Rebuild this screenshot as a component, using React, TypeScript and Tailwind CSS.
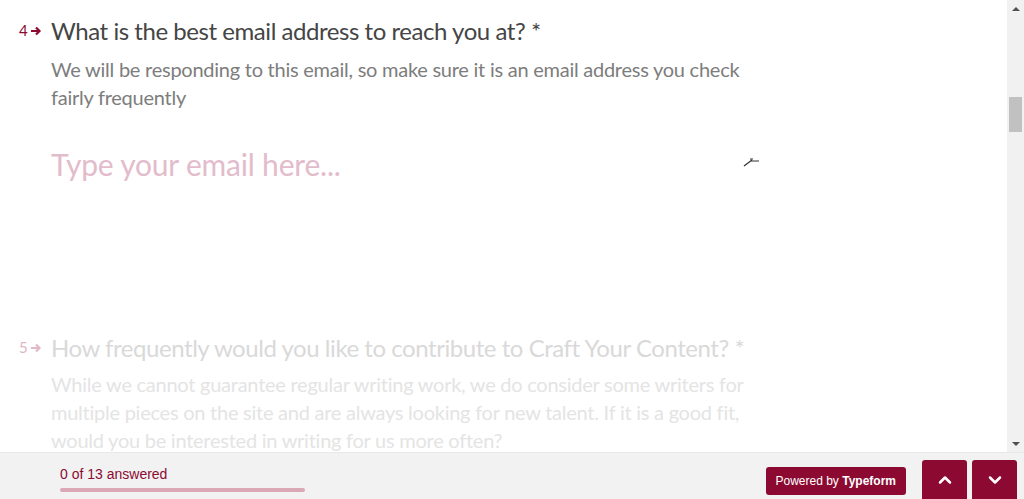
import { ChevronDown, ChevronUp } from 'lucide-react'

const sans = { fontFamily: 'Lato, "Noto Sans", sans-serif' }

function Arrow({ faded }: { faded?: boolean }) {
  return (
    <svg width="12" height="10" viewBox="0 0 12 10" className={faded ? 'text-[#e2b9c6]' : 'text-[#8c0a31]'}>
      <path d="M1 5h8M6 1.5L9.5 5 6 8.5" fill="none" stroke="currentColor" strokeWidth="2.2" />
    </svg>
  )
}

function Num({ n, faded }: { n: number; faded?: boolean }) {
  return (
    <div className="absolute left-[-32px] top-[8px] flex items-center gap-[2px]">
      <span className={`text-[15px] leading-none ${faded ? 'text-[#e0b5c3]' : 'text-[#8c0a31]'}`}>{n}</span>
      <Arrow faded={faded} />
    </div>
  )
}

export default function App() {
  return (
    <div className="flex h-[499px] w-[1024px] flex-col overflow-hidden bg-white" style={sans}>
      <div className="flex min-h-0 flex-1 overflow-hidden">
        <div className="flex-1 overflow-hidden pl-[51px] pt-[15px]">
          {/* question 4 */}
          <div className="relative w-[720px]">
            <Num n={4} />
            <h2 className="whitespace-nowrap text-[24px] leading-[32px] tracking-[-0.45px] text-[#454545]">
              What is the best email address to reach you at? *
            </h2>
            <p className="mt-[8px] whitespace-nowrap text-[20px] leading-[28px] tracking-[-0.25px] text-[#7d7d7d]">
              We will be responding to this email, so make sure it is an email address you check
              <br />
              fairly frequently
            </p>
            <div className="relative mt-[33px] h-[40px]">
              <span className="text-[30px] leading-[40px] tracking-[-0.2px] text-[#e3bccb]">Type your email here...</span>
              <svg className="absolute left-[692px] top-[12px]" width="18" height="12" viewBox="0 0 18 12">
                <path d="M1 10L9 4M7 3L10 3M7 5L16 5" stroke="#333" strokeWidth="1.2" fill="none" />
              </svg>
            </div>
          </div>

          {/* question 5 */}
          <div className="relative mt-[148px] w-[720px]">
            <Num n={5} faded />
            <h2 className="whitespace-nowrap text-[24px] leading-[32px] tracking-[-0.45px] text-[#d9d9d9]">
              How frequently would you like to contribute to Craft Your Content? *
            </h2>
            <p className="mt-[6px] whitespace-nowrap text-[20px] leading-[28px] tracking-[-0.25px] text-[#e4e4e4]">
              While we cannot guarantee regular writing work, we do consider some writers for
              <br />
              multiple pieces on the site and are always looking for new talent. If it is a good fit,
              <br />
              would you be interested in writing for us more often?
            </p>
          </div>
        </div>

        {/* scrollbar */}
        <div className="flex w-[17px] flex-col bg-[#f1f1f1]">
          <div className="flex h-[17px] items-center justify-center">
            <div className="h-0 w-0 border-x-[4px] border-b-[4px] border-x-transparent border-b-[#505050]" />
          </div>
          <div className="ml-[2px] mt-[80px] h-[35px] w-[13px] bg-[#c1c1c1]" />
          <div className="flex-1" />
          <div className="flex h-[17px] items-center justify-center">
            <div className="h-0 w-0 border-x-[4px] border-t-[4px] border-x-transparent border-t-[#505050]" />
          </div>
        </div>
      </div>

      {/* footer */}
      <div
        className="flex h-[47px] shrink-0 items-end border-t border-[#e8e8e8] bg-[#f2f2f2]"
        style={{ fontFamily: '"Liberation Sans", Arial, sans-serif' }}
      >
        <div className="mb-[7px] ml-[60px] w-[245px]">
          <div className="text-[14px] leading-[16px] text-[#8c0a31]">0 of 13 answered</div>
          <div className="mt-[6px] h-[4px] rounded-full bg-[#dba8b8]" />
        </div>
        <div className="flex-1" />
        <div className="mb-[4px] flex h-[28px] items-center rounded-[3px] bg-[#8c0a31] px-[10px] text-[12px] text-white">
          Powered by&nbsp;<span className="font-bold">Typeform</span>
        </div>
        <div className="ml-[16px] flex gap-[5px] pr-[7px]">
          <div className="flex h-[39px] w-[45px] items-center justify-center rounded-t-[3px] bg-[#8c0a31] text-white">
            <ChevronUp size={20} strokeWidth={3} />
          </div>
          <div className="flex h-[39px] w-[45px] items-center justify-center rounded-t-[3px] bg-[#8c0a31] text-white">
            <ChevronDown size={20} strokeWidth={3} />
          </div>
        </div>
      </div>
    </div>
  )
}
